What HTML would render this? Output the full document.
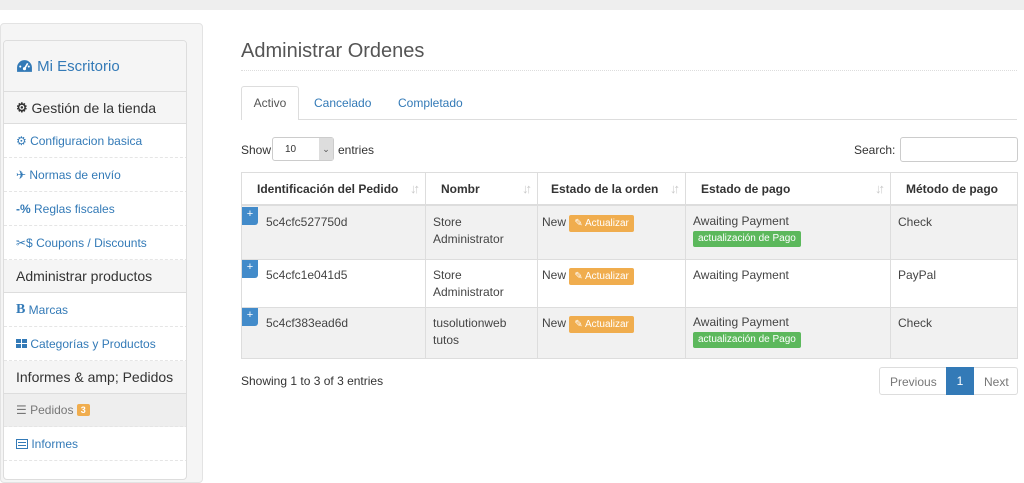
<!DOCTYPE html>
<html><head><meta charset="utf-8"><style>
*{box-sizing:border-box;margin:0;padding:0}
body{width:1024px;height:466px;overflow:hidden;background:#fff;font-family:"Liberation Sans",Arial,sans-serif;font-size:12px;color:#333;position:relative}
.a{position:absolute}
.lnk{color:#337ab7}
.top{left:0;top:0;width:1024px;height:10px;background:#eee}
.outer{left:0;top:23px;width:203px;height:460px;background:#f5f5f5;border:1px solid #e3e3e3;border-radius:4px}
.inner{left:3px;top:40px;width:184px;height:440px;background:#fff;border:1px solid #ddd;border-radius:4px;overflow:hidden}
.it{position:absolute;left:0;width:184px;border-bottom:1px dashed #e5e5e5;padding-left:12px;display:flex;align-items:center}
.hd{background:#f5f5f5;border-bottom:1px solid #ddd;font-size:14px;color:#333}
.th{position:absolute;top:172px;height:34px;font-weight:bold;font-size:12px;padding-top:10px;border-right:1px solid #ddd;border-bottom:2px solid #ddd}
.td{position:absolute;border-right:1px solid #ddd;padding:8px 7px;font-size:12px;line-height:17px;color:#444}
.btn{display:inline-block;background:#f0ad4e;color:#fff;font-size:10px;padding:1px 5px;border-radius:2px;line-height:15px}
.gr{display:inline-block;background:#5cb85c;color:#fff;font-size:10px;padding:1px 5px;border-radius:2px;line-height:14px}
.plus{position:absolute;left:242px;width:16px;height:18px;background:#428bca;color:#fff;font-size:11px;text-align:center;line-height:14px;border-radius:0 0 3px 0}
.sort{position:absolute;right:8px;top:9px;color:#c8c8c8;font-size:13px;font-weight:bold;letter-spacing:-3px}
</style></head><body>
<div class="a top"></div>
<div class="a outer"></div>
<div class="a inner">
 <div class="it hd lnk" style="top:0;height:51px;font-size:15px;color:#337ab7"><svg width="17" height="14" viewBox="0 0 16 13"><path d="M8 1A7 7 0 0 0 1 8v4h14V8A7 7 0 0 0 8 1z" fill="#337ab7"/><path d="M8 9L11 4" stroke="#fff" stroke-width="1.5"/><circle cx="8" cy="9" r="1.5" fill="#fff"/><circle cx="4" cy="7" r="1" fill="#fff"/><circle cx="12" cy="7" r="1" fill="#fff"/></svg>&nbsp;Mi Escritorio</div>
 <div class="it hd" style="top:51px;height:32px"><span style="font-size:13px;font-weight:bold">⚙</span>&nbsp;Gestión de la tienda</div>
 <div class="it lnk" style="top:83px;height:34px">⚙&nbsp;Configuracion basica</div>
 <div class="it lnk" style="top:117px;height:34px">✈&nbsp;Normas de envío</div>
 <div class="it lnk" style="top:151px;height:34px"><b>-%</b>&nbsp;Reglas fiscales</div>
 <div class="it lnk" style="top:185px;height:34px">✂$&nbsp;Coupons / Discounts</div>
 <div class="it hd" style="top:219px;height:33px">Administrar productos</div>
 <div class="it lnk" style="top:252px;height:34px"><b style="font-family:'Liberation Serif',serif;font-size:14px">B</b>&nbsp;Marcas</div>
 <div class="it lnk" style="top:286px;height:34px"><svg width="11" height="10"><rect x="0" y="0" width="5" height="4" fill="#337ab7"/><rect x="6" y="0" width="5" height="4" fill="#337ab7"/><rect x="0" y="5" width="5" height="4" fill="#337ab7"/><rect x="6" y="5" width="5" height="4" fill="#337ab7"/></svg>&nbsp;Categorías y Productos</div>
 <div class="it hd" style="top:320px;height:33px;background:#f5f5f5">Informes &amp; amp; Pedidos</div>
 <div class="it" style="top:353px;height:33px;background:#eee;color:#777">☰&nbsp;Pedidos&nbsp;<span style="background:#f0ad4e;color:#fff;font-size:9px;font-weight:bold;padding:1px 4px;border-radius:2px">3</span></div>
 <div class="it lnk" style="top:386px;height:34px"><svg width="12" height="10"><rect x="0.5" y="0.5" width="11" height="9" fill="none" stroke="#337ab7"/><rect x="2" y="3" width="8" height="1" fill="#337ab7"/><rect x="2" y="6" width="8" height="1" fill="#337ab7"/></svg>&nbsp;Informes</div>
</div>

<div class="a" style="left:241px;top:40px;font-size:20px;color:#555">Administrar Ordenes</div>
<div class="a" style="left:241px;top:70px;width:776px;border-top:1px dotted #ddd"></div>
<div class="a" style="left:241px;top:119px;width:776px;border-top:1px solid #ddd"></div>
<div class="a" style="left:241px;top:86px;width:58px;height:34px;background:#fff;border:1px solid #ddd;border-bottom:none;border-radius:3px 3px 0 0;text-align:center;line-height:33px;color:#555">Activo</div>
<div class="a lnk" style="left:314px;top:96px">Cancelado</div>
<div class="a lnk" style="left:398px;top:96px">Completado</div>

<div class="a" style="left:241px;top:143px">Show</div>
<div class="a" style="left:272px;top:137px;width:62px;height:24px;border:1px solid #ccc;border-radius:3px;font-size:10px;padding:6px 12px">10</div>
<div class="a" style="left:319px;top:138px;width:14px;height:22px;background:#ddd;font-size:9px;text-align:center;line-height:22px;color:#555">⌄</div>
<div class="a" style="left:338px;top:143px">entries</div>
<div class="a" style="left:854px;top:143px">Search:</div>
<div class="a" style="left:900px;top:137px;width:118px;height:25px;border:1px solid #ccc;border-radius:3px"></div>

<div class="a" style="left:241px;top:172px;width:777px;height:187px;border:1px solid #ddd"></div>
<div class="a" style="left:242px;top:206px;width:775px;height:53px;background:#f1f1f1"></div>
<div class="a" style="left:242px;top:307px;width:775px;height:51px;background:#f1f1f1;border-top:1px solid #ddd"></div>
<div class="a" style="left:242px;top:259px;width:775px;border-top:1px solid #ddd"></div>

<div class="th" style="left:242px;width:184px;padding-left:15px">Identificación del Pedido<span class="sort">↓↑</span></div>
<div class="th" style="left:426px;width:112px;padding-left:15px">Nombr<span class="sort">↓↑</span></div>
<div class="th" style="left:538px;width:148px;padding-left:13px">Estado de la orden<span class="sort">↓↑</span></div>
<div class="th" style="left:686px;width:205px;padding-left:15px">Estado de pago<span class="sort">↓↑</span></div>
<div class="th" style="left:891px;width:126px;padding-left:15px;border-right:none">Método de pago</div>

<div class="plus" style="top:207px">+</div><div class="plus" style="top:260px">+</div><div class="plus" style="top:308px">+</div>

<div class="td" style="left:259px;top:206px;width:167px;height:53px;padding-top:8px">5c4cfc527750d</div>
<div class="td" style="left:426px;top:206px;width:112px;height:53px">Store<br>Administrator</div>
<div class="td" style="left:538px;top:206px;width:148px;height:53px;padding-left:4px">New <span class="btn">✎ Actualizar</span></div>
<div class="td" style="left:686px;top:206px;width:205px;height:53px;padding-top:7px;line-height:16px">Awaiting Payment<br><span class="gr">actualización de Pago</span></div>
<div class="td" style="left:891px;top:206px;width:126px;height:53px;border:none">Check</div>

<div class="td" style="left:259px;top:259px;width:167px;height:48px">5c4cfc1e041d5</div>
<div class="td" style="left:426px;top:259px;width:112px;height:48px">Store<br>Administrator</div>
<div class="td" style="left:538px;top:259px;width:148px;height:48px;padding-left:4px">New <span class="btn">✎ Actualizar</span></div>
<div class="td" style="left:686px;top:259px;width:205px;height:48px">Awaiting Payment</div>
<div class="td" style="left:891px;top:259px;width:126px;height:48px;border:none">PayPal</div>

<div class="td" style="left:259px;top:307px;width:167px;height:51px">5c4cf383ead6d</div>
<div class="td" style="left:426px;top:307px;width:112px;height:51px">tusolutionweb<br>tutos</div>
<div class="td" style="left:538px;top:307px;width:148px;height:51px;padding-left:4px">New <span class="btn">✎ Actualizar</span></div>
<div class="td" style="left:686px;top:307px;width:205px;height:51px;padding-top:7px;line-height:16px">Awaiting Payment<br><span class="gr">actualización de Pago</span></div>
<div class="td" style="left:891px;top:307px;width:126px;height:51px;border:none">Check</div>

<div class="a" style="left:241px;top:374px">Showing 1 to 3 of 3 entries</div>
<div class="a" style="left:879px;top:367px;width:139px;height:28px;border:1px solid #ddd;border-radius:3px"></div>
<div class="a" style="left:890px;top:375px;color:#777">Previous</div>
<div class="a" style="left:946px;top:367px;width:28px;height:28px;background:#337ab7;color:#fff;text-align:center;line-height:28px">1</div>
<div class="a" style="left:984px;top:375px;color:#777">Next</div>
</body></html>
